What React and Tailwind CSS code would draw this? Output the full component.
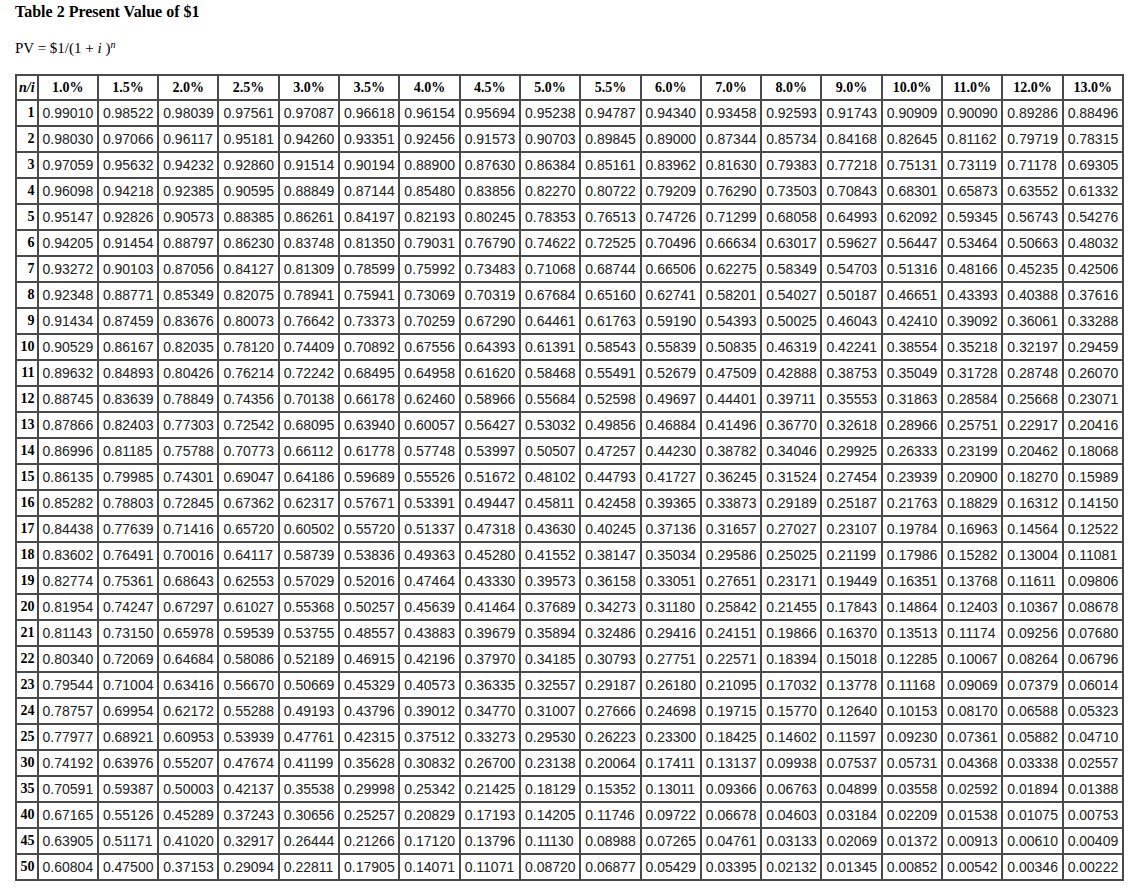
import React from "react";

const rates = [1, 1.5, 2, 2.5, 3, 3.5, 4, 4.5, 5, 5.5, 6, 7, 8, 9, 10, 11, 12, 13];
const periods = [...Array.from({ length: 25 }, (_, i) => i + 1), 30, 35, 40, 45, 50];

export default function App() {
  return (
    <div className="bg-white min-h-[886px] px-[15px] pt-[3px] text-black" style={{ fontFamily: '"Liberation Serif", "Times New Roman", serif' }}>
      <h1 className="text-[16px] font-bold leading-[18px]">Table 2 Present Value of $1</h1>
      <p className="mt-[18px] text-[15px] leading-[18px]">
        PV = $1/(1 + <i>i</i> )<sup className="italic text-[10px]">n</sup>
      </p>
      <table className="mt-[17px] border-separate border-spacing-0 border border-[#4a4a4a]">
        <thead>
          <tr>
            <th className="border border-[#4a4a4a] px-[2px] py-[3px] text-[14px] leading-[17px] font-bold italic text-center">n/i</th>
            {rates.map((r) => (
              <th key={r} className="border border-[#4a4a4a] px-[3px] py-[3px] text-[14px] leading-[17px] font-bold text-center">
                {r.toFixed(1)}%
              </th>
            ))}
          </tr>
        </thead>
        <tbody>
          {periods.map((n) => (
            <tr key={n}>
              <td className="border border-[#4a4a4a] px-[2px] py-[3px] text-[14px] leading-[18px] font-bold text-right">{n}</td>
              {rates.map((r) => (
                <td
                  key={r}
                  className="border border-[#4a4a4a] pl-[4px] pr-[3.7px] py-[3px] text-[14px] leading-[18px] text-left text-[#222]"
                  style={{ fontFamily: '"Liberation Sans", Arial, sans-serif' }}
                >
                  {Math.pow(1 + r / 100, -n).toFixed(5)}
                </td>
              ))}
            </tr>
          ))}
        </tbody>
      </table>
    </div>
  );
}
